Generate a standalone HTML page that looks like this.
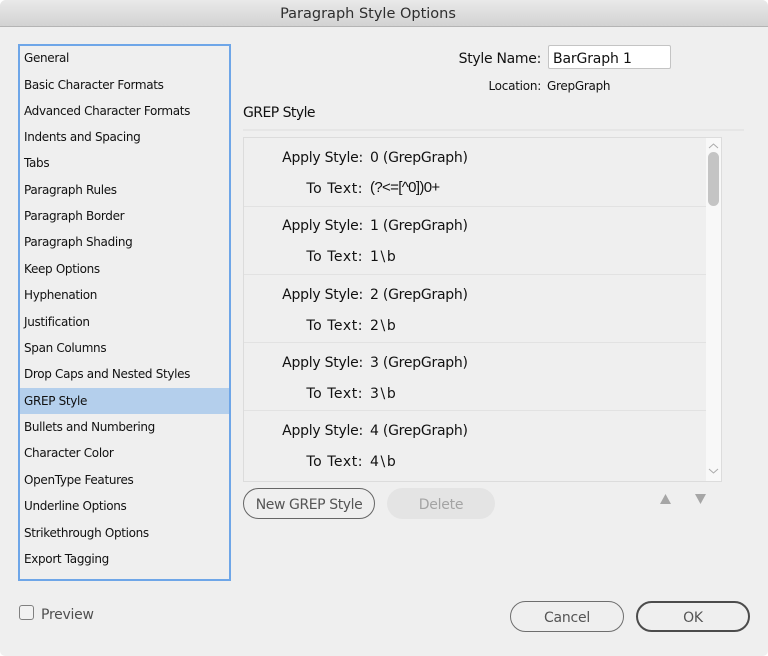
<!DOCTYPE html>
<html><head><meta charset="utf-8">
<style>
html,body{margin:0;padding:0;background:#fff}
#w{position:relative;width:768px;height:656px;overflow:hidden;background:#efefef;font-family:"DejaVu Sans","Liberation Sans",sans-serif;color:#1a1a1a;border-radius:6px 6px 5px 5px;filter:blur(.3px)}
#w div,#w span{position:absolute;white-space:nowrap}
.t{background:linear-gradient(#e9e9e9,#d2d2d2);left:0;top:0;width:768px;height:26px;border-bottom:1px solid #b4b4b4}
.i{left:24px;font-size:12px;line-height:16px;letter-spacing:-.33px;color:#111}
.l{font-size:14px;line-height:18px;letter-spacing:-.25px;text-align:right;right:405px;color:#111}
.x{letter-spacing:.55px}
.v{font-size:14px;line-height:18px;letter-spacing:-.25px;left:370px;color:#111}
.n{letter-spacing:1.6px}
.s{left:244px;width:462px;height:1px;background:#e2e2e2}
.b{border-radius:16px;box-sizing:border-box;text-align:center;font-size:14px;letter-spacing:-.25px;color:#555}
</style></head><body>
<div id="w">
<div class="t"></div>
<div style="left:0;width:736px;top:5px;text-align:center;font-size:14.5px;line-height:18px;color:#2e2e2e;letter-spacing:0">Paragraph Style Options</div>

<div style="left:18px;top:44px;width:213px;height:537px;box-sizing:border-box;border:2px solid #6ea6e8"></div>
<div style="left:20px;top:388px;width:209px;height:26px;background:#b4cfec"></div>
<div class="i" style="top:50px">General</div>
<div class="i" style="top:77px">Basic Character Formats</div>
<div class="i" style="top:103px">Advanced Character Formats</div>
<div class="i" style="top:129px">Indents and Spacing</div>
<div class="i" style="top:155px">Tabs</div>
<div class="i" style="top:182px">Paragraph Rules</div>
<div class="i" style="top:208px">Paragraph Border</div>
<div class="i" style="top:234px">Paragraph Shading</div>
<div class="i" style="top:261px">Keep Options</div>
<div class="i" style="top:287px">Hyphenation</div>
<div class="i" style="top:314px">Justification</div>
<div class="i" style="top:340px">Span Columns</div>
<div class="i" style="top:366px">Drop Caps and Nested Styles</div>
<div class="i" style="top:393px">GREP Style</div>
<div class="i" style="top:419px">Bullets and Numbering</div>
<div class="i" style="top:445px">Character Color</div>
<div class="i" style="top:472px">OpenType Features</div>
<div class="i" style="top:498px">Underline Options</div>
<div class="i" style="top:525px">Strikethrough Options</div>
<div class="i" style="top:551px">Export Tagging</div>

<div style="left:19px;top:605px;width:15px;height:15px;box-sizing:border-box;border:1.5px solid #808080;border-radius:3px;background:#f2f2f2"></div>
<div style="left:41px;top:606px;font-size:14px;line-height:18px;letter-spacing:-.25px;color:#505050">Preview</div>

<div style="right:227px;top:50px;font-size:14px;line-height:18px;letter-spacing:-.3px;color:#111">Style Name:</div>
<div style="left:548px;top:45px;width:123px;height:24px;box-sizing:border-box;border:1px solid #c4c4c4;border-radius:2px;background:#fff"></div>
<div style="left:553px;top:50px;font-size:14px;line-height:18px;letter-spacing:-.15px;color:#111">BarGraph 1</div>
<div style="right:227px;top:78px;font-size:12px;line-height:16px;letter-spacing:-.25px;color:#111">Location:</div>
<div style="left:547px;top:78px;font-size:12px;line-height:16px;letter-spacing:-.28px;color:#111">GrepGraph</div>

<div style="left:243px;top:104px;font-size:14px;line-height:18px;letter-spacing:-.55px;color:#111">GREP Style</div>
<div style="left:243px;top:129px;width:501px;height:2px;background:#e6e6e6"></div>

<div style="left:243px;top:137px;width:479px;height:345px;box-sizing:border-box;border:1px solid #dcdcdc;background:#efefef"></div>
<div style="left:706px;top:138px;width:15px;height:343px;background:#f8f8f8"></div>
<div style="left:708px;top:152px;width:11px;height:54px;border-radius:6px;background:#c4c4c4"></div>
<svg style="position:absolute;left:706px;top:138px" width="15" height="343"><path d="M3 10L7.500 6L12 10" fill="none" stroke="#aaa" stroke-width="1"/><path d="M3 331L7.500 335L12 331" fill="none" stroke="#aaa" stroke-width="1"/></svg>

<div class="s" style="top:206px"></div>
<div class="s" style="top:274px"></div>
<div class="s" style="top:342px"></div>
<div class="s" style="top:410px"></div>

<div class="l" style="top:149px">Apply Style:</div><div class="v" style="top:149px">0 (GrepGraph)</div>
<div class="l x" style="top:180px">To Text:</div><div class="v" style="top:179px;font-size:15px;letter-spacing:-.65px;font-family:'Liberation Sans',sans-serif">(?&lt;=[^0])0+</div>
<div class="l" style="top:217px">Apply Style:</div><div class="v" style="top:217px">1 (GrepGraph)</div>
<div class="l x" style="top:248px">To Text:</div><div class="v n" style="top:248px">1\b</div>
<div class="l" style="top:286px">Apply Style:</div><div class="v" style="top:286px">2 (GrepGraph)</div>
<div class="l x" style="top:317px">To Text:</div><div class="v n" style="top:317px">2\b</div>
<div class="l" style="top:354px">Apply Style:</div><div class="v" style="top:354px">3 (GrepGraph)</div>
<div class="l x" style="top:385px">To Text:</div><div class="v n" style="top:385px">3\b</div>
<div class="l" style="top:422px">Apply Style:</div><div class="v" style="top:422px">4 (GrepGraph)</div>
<div class="l x" style="top:453px">To Text:</div><div class="v n" style="top:453px">4\b</div>

<div class="b" style="left:243px;top:488px;width:132px;height:31px;border:1px solid #666;line-height:32px;letter-spacing:-.42px">New GREP Style</div>
<div class="b" style="left:387px;top:488px;width:108px;height:31px;background:#e4e4e4;color:#a4a4a4;line-height:34px">Delete</div>
<svg style="position:absolute;left:655px;top:490px" width="60" height="18"><path d="M5 14L10.500 4L16 14Z" fill="#a6a6a6"/><path d="M40 4H51L45.500 14Z" fill="#a6a6a6"/></svg>

<div class="b" style="left:510px;top:601px;width:114px;height:31px;border:1px solid #6e6e6e;line-height:32px">Cancel</div>
<div class="b" style="left:636px;top:601px;width:114px;height:31px;border:2px solid #4c4c4c;line-height:30px">OK</div>
</div>
</body></html>
